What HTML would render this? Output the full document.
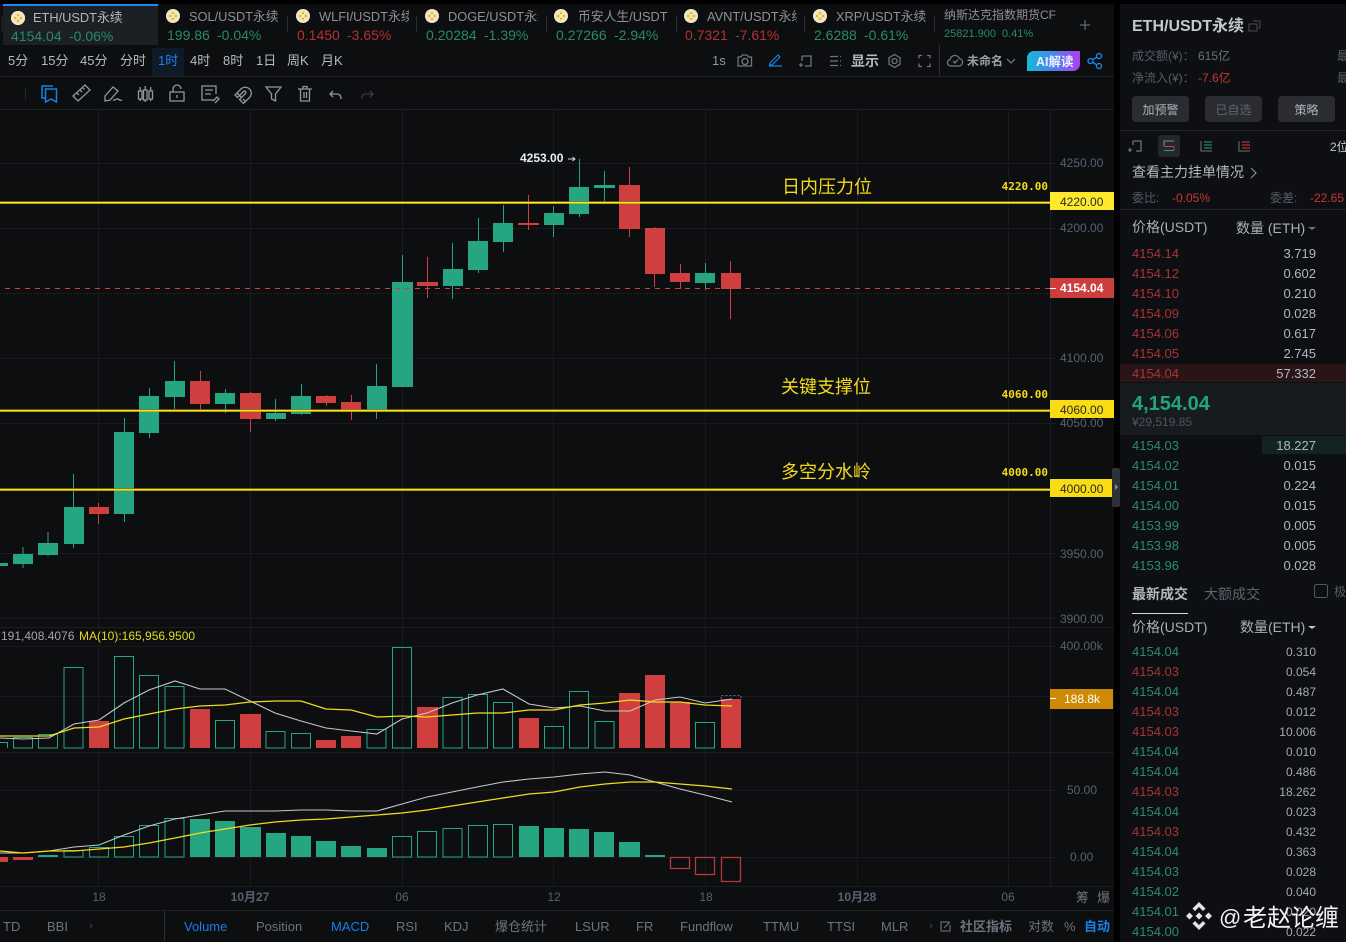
<!DOCTYPE html>
<html lang="zh"><head><meta charset="utf-8"><title>ETH/USDT</title>
<style>
html,body{margin:0;padding:0;background:#0c0e10;width:1346px;height:942px;overflow:hidden}
svg{display:block;font-family:"Liberation Sans","Noto Sans CJK SC",sans-serif}
.g{fill:#26a583}.r{fill:#cf3f3f}
.tn{fill:#8d9198;font-size:12.8px}.tg{fill:#278b6b;font-size:14px}.tr{fill:#b83030;font-size:14px}
.tf{fill:#b6bac0;font-size:13px}
.ax{fill:#566273;font-size:12px}
.pg{fill:#2a8c6c;font-size:13px}.pr{fill:#a63434;font-size:13px}
.q{fill:#b4b7bb;font-size:13px;text-anchor:end}
.q2{fill:#a5a8ad;font-size:12px;text-anchor:end}
.bt{fill:#6d747e;font-size:13px}.bb{fill:#1a7fe8;font-size:13px}
.ic{fill:none;stroke:#9298a0;stroke-width:1.3}
.ann{fill:#f2da1c;font-size:18px}
.mono{font-family:"DejaVu Sans Mono","Liberation Mono",monospace;font-size:11px;fill:#f2da1c;text-anchor:end;font-weight:bold}
</style></head><body>
<svg width="1346" height="942" viewBox="0 0 1346 942" xmlns="http://www.w3.org/2000/svg">
<rect width="1346" height="942" fill="#0c0e10"/>
<rect width="1346" height="4" fill="#000"/>

<!-- top tabs -->
<rect x="3" y="4" width="155" height="41" fill="#1c1f24"/>
<rect x="3" y="4" width="155" height="2" fill="#1a8cf0"/>
<defs><g id="coin"><circle r="7" fill="#efe6cc"/><path d="M0-4.5 1.6-2.9 0-1.3-1.6-2.9ZM-2.9-1.6-1.3 0-2.9 1.6-4.5 0ZM2.9-1.6 4.5 0 2.9 1.6 1.3 0ZM0 1.3 1.6 2.9 0 4.5-1.6 2.9Z" fill="#f0b90b"/></g></defs>
<circle cx="18" cy="18" r="7" fill="#fff"/><use href="#coin" x="18" y="18"/>
<text x="33" y="22" class="tn" style="fill:#b3b7bd">ETH/USDT永续</text>
<text x="11" y="41" class="tg">4154.04</text><text x="69" y="41" class="tg">-0.06%</text>
<g class="tn">
<use href="#coin" x="173" y="16"/><text x="189" y="21" class="tn">SOL/USDT永续</text>
<use href="#coin" x="303" y="16"/><text x="319" y="21" class="tn">WLFI/USDT永续</text>
<use href="#coin" x="432" y="16"/><text x="448" y="21" class="tn">DOGE/USDT永续</text>
<use href="#coin" x="561" y="16"/><text x="578" y="21" class="tn">币安人生/USDT</text>
<use href="#coin" x="691" y="16"/><text x="707" y="21" class="tn">AVNT/USDT永续</text>
<use href="#coin" x="820" y="16"/><text x="836" y="21" class="tn">XRP/USDT永续</text>
</g>
<rect x="409" y="6" width="16" height="20" fill="#0c0e10"/>
<rect x="538" y="6" width="16" height="20" fill="#0c0e10"/>
<rect x="797" y="6" width="16" height="20" fill="#0c0e10"/>
<text x="944" y="19" class="tn" style="font-size:12px">纳斯达克指数期货CFD</text>
<rect x="1056" y="6" width="24" height="20" fill="#0c0e10"/>
<text x="944" y="37" class="tg" style="font-size:11px">25821.900</text><text x="1002" y="37" class="tg" style="font-size:11px">0.41%</text>
<text x="167" y="40" class="tg">199.86</text><text x="217" y="40" class="tg">-0.04%</text>
<text x="297" y="40" class="tr">0.1450</text><text x="347" y="40" class="tr">-3.65%</text>
<text x="426" y="40" class="tg">0.20284</text><text x="484" y="40" class="tg">-1.39%</text>
<text x="556" y="40" class="tg">0.27266</text><text x="614" y="40" class="tg">-2.94%</text>
<text x="685" y="40" class="tr">0.7321</text><text x="735" y="40" class="tr">-7.61%</text>
<text x="814" y="40" class="tg">2.6288</text><text x="864" y="40" class="tg">-0.61%</text>
<path d="M2 16v16M287.500 16v16M416.500 16v16M546.500 16v16M676.500 16v16M804.500 16v16M934.500 16v16" stroke="#2a2d31"/>
<path d="M1085 20v10M1080 25h10" stroke="#777c83" stroke-width="1"/>

<!-- timeframe row -->
<rect x="152" y="48" width="32" height="28" fill="#0f1a28"/>
<g class="tf">
<text x="8" y="65" class="tf">5分</text><text x="41" y="65" class="tf">15分</text><text x="80" y="65" class="tf">45分</text><text x="120" y="65" class="tf">分时</text>
<text x="158" y="65" class="tf" style="fill:#1a7fe8">1时</text><text x="190" y="65" class="tf">4时</text><text x="223" y="65" class="tf">8时</text><text x="256" y="65" class="tf">1日</text><text x="287" y="65" class="tf">周K</text><text x="321" y="65" class="tf">月K</text>
<text x="712" y="65" class="tf" style="fill:#8b97a8">1s</text>
</g>
<path class="ic" style="stroke:#6f747b" d="M738 57h3l1.500-2h4.500l1.500 2h3v9h-13.500zM745 58.500a3 3 0 1 0 .01 0z"/>
<path d="M769 66h13M770 63l8-8 2 2-8 8h-2.500z" fill="none" stroke="#1a7fe8" stroke-width="1.2"/>
<path class="ic" style="stroke:#6f747b" d="M802 56h9v10h-6M801 67v-4M799 65h4M802 56v5"/>
<path class="ic" style="stroke:#6f747b" d="M830 56.500h8M830 61h8M830 65.500h8M840 56.500h1M840 61h1M840 65.500h1"/>
<text x="851" y="66" style="fill:#b5b9bf;font-size:14px;font-weight:bold">显示</text>
<path class="ic" style="stroke:#6f747b" d="M894.500 54.500l5.500 3.200v6.500l-5.500 3.200-5.500-3.200v-6.500z"/><circle cx="894.500" cy="61" r="2.500" class="ic" style="stroke:#6f747b"/>
<path class="ic" style="stroke:#6f747b" d="M919 58.500v-3h3M930 58.500v-3h-3M919 63.500v3h3M930 63.500v3h-3"/>
<path d="M939.500 45v31" stroke="#2a2d31"/>
<path class="ic" style="stroke:#747a82" d="M953 66h6a3.800 3.800 0 0 0 .5-7.500 5 5 0 0 0-9.500 1 3.300 3.300 0 0 0 1 6.500zM953 61l2 2 3-3.500"/>
<text x="967" y="65" class="tf" style="font-size:12px;font-weight:bold;fill:#9aa0a8">未命名</text>
<path class="ic" d="M1007 59l4 4 4-4" style="stroke:#6f747b"/>
<defs><linearGradient id="ai" x1="0" x2="1" y1="0" y2="0"><stop offset="0" stop-color="#17b8d6"/><stop offset=".5" stop-color="#4a83ef"/><stop offset="1" stop-color="#b03df0"/></linearGradient></defs>
<path d="M1034 51h46v13a7 7 0 0 1-7 7h-46v-13a7 7 0 0 1 7-7z" fill="url(#ai)"/>
<text x="1036" y="66" style="fill:#e8f1ff;font-size:12.500px;font-weight:bold">AI解读</text>
<g fill="none" stroke="#1a8cf0" stroke-width="1.3"><circle cx="1090.500" cy="61" r="2.500"/><circle cx="1099" cy="56" r="2.500"/><circle cx="1099" cy="66" r="2.500"/><path d="M1092.700 59.700l4-2.500M1092.700 62.300l4 2.500"/></g>
<rect x="0" y="76" width="1116" height="1" fill="#1f2124"/>
<rect x="0" y="109" width="1116" height="1" fill="#1f2124"/>

<!-- drawing tools -->
<path d="M25.500 87v13" stroke="#26292c"/>
<g fill="none" stroke="#1a7fe8" stroke-width="1.500"><path d="M46 98h-4V86h11"/><path d="M45.500 89h11v13l-5.500-3-5.500 3z"/></g>
<g class="ic">
<path d="M73 96l12-11 5 5-12 11zM77 93l2 2M80 90l2 2M83 88l1.500 1.500"/>
<path d="M105 96l8-9 5 4-8 9-5 1zM113 100c2 1 3-2 5-1s2 2 4 1"/>
<path d="M138.500 91h3.500v8h-3.500zM143.500 90h3.500v10h-3.500zM149 91h3.500v8H149zM140.200 87v4M140.200 99v2M145.200 86v4M145.200 100v2M150.700 87v4M150.700 99v2"/>
<path d="M170 92h14v9h-14zM173 92v-3a4 4 0 0 1 8 0M177 95v3"/>
<path d="M214 100h-12V86h14v8M205 90h8M205 94h6M213 101l4-4 2 2-4 4"/>
<path d="M235 95l6-6a6 6 0 0 1 8.500 8.500l-6 6-4-4 6-6a1 1 0 0 0-2-2l-6 6zM237 93l4 4M243 99l3 3"/>
<path d="M266 87h15l-5.500 7v7l-4-2v-5z"/>
<path d="M298 89h14M300.500 89v12h9V89M303 86.500h4v2.500h-4zM304 92v6M306.500 92v6"/>
<path d="M333 91l-3 3 3 3M330 94h7c3 0 4 2 4 5"/>
</g>
<path d="M370 91l3 3-3 3M373 94h-7c-3 0-4 2-4 5" fill="none" stroke="#35383c" stroke-width="1.300"/>

<!-- grid -->
<g stroke="#181a1d" fill="none">
<path d="M0 163.500H1056M0 228.500H1056M0 293.500H1056M0 358.500H1056M0 423.500H1056M0 488.500H1056M0 553.500H1056M0 618.500H1056M0 646.500H1056M0 696.500H1056M0 790.500H1056M0 857.500H1056"/>
<path d="M98.500 110V886M250.500 110V886M402.500 110V886M553.500 110V886M705.500 110V886M857.500 110V886M1008.500 110V886"/>
</g>
<g stroke="#1b1d20" fill="none"><path d="M0 627.500H1114M0 752.500H1114M0 886.500H1114M1050.500 110V886"/></g>

<!-- candles -->
<g class="g">
<rect x="0" y="563" width="8" height="3"/>
<rect x="22.500" y="547" width="1" height="21"/><rect x="13" y="554" width="20" height="10"/>
<rect x="47.500" y="532" width="1" height="24"/><rect x="38" y="543" width="20" height="12"/>
<rect x="73" y="474" width="1" height="74"/><rect x="64" y="507" width="20" height="37"/>
<rect x="124" y="418" width="1" height="104"/><rect x="114" y="432" width="20" height="82"/>
<rect x="149" y="388" width="1" height="50"/><rect x="139" y="396" width="20" height="37"/>
<rect x="174" y="361" width="1" height="48"/><rect x="165" y="381" width="20" height="16"/>
<rect x="225" y="389" width="1" height="24"/><rect x="215" y="393" width="20" height="11"/>
<rect x="275" y="399" width="1" height="22"/><rect x="266" y="413" width="20" height="6"/>
<rect x="301" y="384" width="1" height="31"/><rect x="291" y="396" width="20" height="18"/>
<rect x="376" y="364" width="1" height="55"/><rect x="367" y="386" width="20" height="24"/>
<rect x="402" y="255" width="1" height="30"/><rect x="392" y="282" width="21" height="105"/>
<rect x="452" y="243" width="1" height="56"/><rect x="443" y="269" width="20" height="17"/>
<rect x="478" y="218" width="1" height="55"/><rect x="468" y="241" width="20" height="29"/>
<rect x="503" y="205" width="1" height="47"/><rect x="493" y="223" width="20" height="19"/>
<rect x="553" y="206" width="1" height="31"/><rect x="544" y="213" width="20" height="12"/>
<rect x="579" y="159" width="1" height="58"/><rect x="569" y="187" width="20" height="27"/>
<rect x="604" y="171" width="1" height="30"/><rect x="594" y="185" width="21" height="3"/>
<rect x="705" y="263" width="1" height="27"/><rect x="695" y="273" width="20" height="10"/>
</g>
<g class="r">
<rect x="98" y="503" width="1" height="21"/><rect x="89" y="507" width="20" height="7"/>
<rect x="200" y="371" width="1" height="39"/><rect x="190" y="381" width="20" height="23"/>
<rect x="250" y="392" width="1" height="40"/><rect x="240" y="393" width="21" height="26"/>
<rect x="326" y="395" width="1" height="11"/><rect x="316" y="396" width="20" height="7"/>
<rect x="351" y="395" width="1" height="25"/><rect x="341" y="402" width="20" height="8"/>
<rect x="427" y="257" width="1" height="41"/><rect x="417" y="282" width="21" height="4"/>
<rect x="528" y="195" width="1" height="35"/><rect x="518" y="223" width="21" height="2"/>
<rect x="629" y="167" width="1" height="70"/><rect x="619" y="185" width="21" height="44"/>
<rect x="654" y="227" width="1" height="60"/><rect x="645" y="228" width="20" height="46"/>
<rect x="680" y="264" width="1" height="25"/><rect x="670" y="273" width="20" height="9"/>
<rect x="730" y="261" width="1" height="58"/><rect x="721" y="273" width="20" height="16"/>
</g>
<path d="M5 288.500H1050" stroke="#cf3f3f" stroke-dasharray="5 5"/>

<!-- yellow lines -->
<g>
<rect x="0" y="201" width="1050" height="3" fill="#8a7a12" opacity=".7"/><rect x="0" y="202" width="1050" height="1.500" fill="#ffe92a"/>
<rect x="0" y="409" width="1050" height="3" fill="#8a7a12" opacity=".7"/><rect x="0" y="410" width="1050" height="1.500" fill="#ffe020"/>
<rect x="0" y="488" width="1050" height="3" fill="#8a7a12" opacity=".7"/><rect x="0" y="489" width="1050" height="1.500" fill="#ffe020"/>
</g>
<text x="782" y="193" class="ann">日内压力位</text>
<text x="781" y="393" class="ann">关键支撑位</text>
<text x="781" y="478" class="ann">多空分水岭</text>
<text x="1048" y="190" class="mono">4220.00</text>
<text x="1048" y="398" class="mono">4060.00</text>
<text x="1048" y="476" class="mono">4000.00</text>
<text x="520" y="162" style="fill:#e8eef5;font-size:12px;font-weight:bold">4253.00</text>
<path d="M568 159h7M572.500 157l2.500 2-2.500 2" fill="none" stroke="#d8d8d8"/>

<!-- price axis -->
<g class="ax">
<text x="1060" y="167" class="ax">4250.00</text><text x="1060" y="232" class="ax">4200.00</text>
<text x="1060" y="362" class="ax">4100.00</text><text x="1060" y="427" class="ax">4050.00</text>
<text x="1060" y="558" class="ax">3950.00</text><text x="1060" y="623" class="ax">3900.00</text>
<text x="1060" y="650" class="ax">400.00k</text><text x="1067" y="794" class="ax">50.00</text><text x="1070" y="861" class="ax">0.00</text>
</g>
<rect x="1050" y="192" width="64" height="18" fill="#ffe92e"/><text x="1060" y="206" style="fill:#2a2a1a;font-size:12px">4220.00</text>
<rect x="1050" y="278" width="64" height="20" fill="#cc3d3d"/><rect x="1050" y="288" width="6" height="1" fill="#fff"/><text x="1060" y="292" style="fill:#fff;font-size:12px;font-weight:bold">4154.04</text>
<rect x="1050" y="400" width="64" height="18" fill="#fadc14"/><text x="1060" y="414" style="fill:#2a2a1a;font-size:12px">4060.00</text>
<rect x="1050" y="479" width="64" height="18" fill="#fadc14"/><text x="1060" y="493" style="fill:#2a2a1a;font-size:12px">4000.00</text>
<rect x="1050" y="689" width="63" height="20" fill="#cf8a05"/><rect x="1050" y="698" width="6" height="1" fill="#fff"/><text x="1064" y="703" style="fill:#fff;font-size:12px">188.8k</text>

<!-- legend -->
<text x="1" y="640" style="fill:#a4a6aa;font-size:12px">191,408.4076</text>
<text x="79" y="640" style="fill:#e4d822;font-size:12px">MA(10):165,956.9500</text>

<!-- volume -->
<g fill="none" stroke="#26a583">
<path d="M0 742.500H7.500V748"/>
<rect x="13.500" y="737.500" width="19" height="10.500"/><rect x="38.500" y="734.500" width="19" height="13.500"/>
<rect x="64" y="667.500" width="19" height="80.500"/><rect x="114.500" y="656.500" width="19" height="91.500"/>
<rect x="139.500" y="675.500" width="19" height="72.500"/><rect x="165" y="686.500" width="19" height="61.500"/>
<rect x="215.500" y="720.500" width="19" height="27.500"/><rect x="266" y="731.500" width="19" height="16.500"/>
<rect x="291.500" y="733.500" width="19" height="14.500"/><rect x="367" y="729.500" width="19" height="18.500"/>
<rect x="392.500" y="647.500" width="19" height="100.500"/><rect x="443" y="697.500" width="19" height="50.500"/>
<rect x="468.500" y="694.500" width="19" height="53.500"/><rect x="493.500" y="702.500" width="19" height="45.500"/>
<rect x="544.500" y="726.500" width="19" height="21.500"/><rect x="569.500" y="691.500" width="19" height="56.500"/>
<rect x="595" y="721.500" width="19" height="26.500"/><rect x="695.500" y="722.500" width="19" height="25.500"/>
</g>
<g class="r">
<rect x="89" y="721" width="20" height="27"/><rect x="190" y="709" width="20" height="39"/><rect x="240" y="714" width="21" height="34"/>
<rect x="316" y="740" width="20" height="8"/><rect x="341" y="736" width="20" height="12"/><rect x="417" y="707" width="21" height="41"/>
<rect x="519" y="718" width="20" height="30"/><rect x="619" y="693" width="21" height="55"/><rect x="645" y="675" width="20" height="73"/>
<rect x="670" y="702" width="20" height="46"/><rect x="721" y="699" width="20" height="49"/>
</g>
<path d="M721 699v-3.500h20v3.500" fill="none" stroke="#6a6a6a" stroke-dasharray="2 2"/>
<polyline fill="none" stroke="#c6c8ca" stroke-width="1.100" points="0,738 23,739 49,738 74,724 99,720 124,703 149,690 175,681 200,689 225,689 250,701 275,713 301,721 326,728 351,731 377,734 402,719 427,713 452,703 477,695 503,689 529,704 554,708 580,706 605,711 630,711 655,700 680,697 705,703 732,699"/>
<polyline fill="none" stroke="#f2dc1a" stroke-width="1.300" points="0,736 49,736 74,728 99,727 124,719 149,714 175,709 200,706 225,705 250,702 275,701 301,701 326,709 351,710 377,717 402,716 427,717 452,715 477,713 503,713 529,710 554,710 580,705 605,703 630,700 655,702 680,702 705,705 732,706"/>

<!-- macd -->
<g class="r"><rect x="0" y="857" width="8" height="5"/><rect x="13" y="857" width="20" height="3"/></g>
<g class="g">
<rect x="38" y="855" width="20" height="2"/><rect x="190" y="819" width="20" height="38"/><rect x="215" y="821" width="20" height="36"/>
<rect x="240" y="827" width="21" height="30"/><rect x="266" y="833" width="20" height="24"/><rect x="291" y="836" width="20" height="21"/>
<rect x="316" y="841" width="20" height="16"/><rect x="341" y="846" width="20" height="11"/><rect x="367" y="848" width="20" height="9"/>
<rect x="519" y="826" width="20" height="31"/><rect x="544" y="828" width="20" height="29"/><rect x="569" y="829" width="20" height="28"/>
<rect x="594" y="832" width="20" height="25"/><rect x="619" y="842" width="21" height="15"/><rect x="645" y="855" width="20" height="2"/>
</g>
<g fill="none" stroke="#26a583">
<rect x="64" y="850.500" width="19" height="6.500"/><rect x="89.500" y="847.500" width="19" height="9.500"/><rect x="114.500" y="836.500" width="19" height="20.500"/>
<rect x="139.500" y="825.500" width="19" height="31.500"/><rect x="165" y="818.500" width="19" height="38.500"/><rect x="392.500" y="836.500" width="19" height="20.500"/>
<rect x="417.500" y="831.500" width="19" height="25.500"/><rect x="443" y="828.500" width="19" height="28.500"/><rect x="468.500" y="825.500" width="19" height="31.500"/>
<rect x="493.500" y="824.500" width="19" height="32.500"/>
</g>
<g fill="none" stroke="#b53a3a" stroke-width="1.300">
<rect x="670.500" y="857.500" width="19" height="11"/><rect x="695.500" y="857.500" width="19" height="17"/><rect x="721.500" y="857.500" width="19" height="24"/>
</g>
<polyline fill="none" stroke="#c6c8ca" stroke-width="1.100" points="0,853 23,853 49,851 74,847 99,845 124,835 149,826 175,819 200,815 225,811 250,811 275,811 301,810 326,810 351,811 377,811 402,804 427,797 452,792 477,787 503,782 529,779 554,777 580,774 605,772 630,775 655,782 680,789 705,795 732,802"/>
<polyline fill="none" stroke="#f2dc1a" stroke-width="1.300" points="0,851 23,853 49,851 74,851 99,849 124,847 149,843 175,838 200,833 225,829 250,825 275,822 301,820 326,819 351,817 377,815 402,813 427,810 452,806 477,802 503,798 529,794 554,792 580,787 605,784 630,782 655,782 680,784 705,786 732,789"/>

<!-- date axis -->
<g class="ax" text-anchor="middle">
<text x="99" y="901" class="ax">18</text><text x="250" y="901" class="ax" style="font-weight:bold">10月27</text>
<text x="402" y="901" class="ax">06</text><text x="554" y="901" class="ax">12</text><text x="706" y="901" class="ax">18</text>
<text x="857" y="901" class="ax" style="font-weight:bold">10月28</text><text x="1008" y="901" class="ax">06</text>
</g>
<text x="1076" y="902" class="bt">筹</text><text x="1097" y="902" class="bt">爆</text>

<!-- bottom tabs -->
<rect x="0" y="910" width="1116" height="1" fill="#1f2124"/>
<path d="M164.500 911v30" stroke="#2a2d31"/>
<text x="3" y="931" class="bt">TD</text><text x="47" y="931" class="bt">BBI</text><path d="M90 924l2 2-2 2" fill="none" stroke="#3c4046"/>
<text x="184" y="931" class="bb">Volume</text><text x="256" y="931" class="bt">Position</text><text x="331" y="931" class="bb">MACD</text>
<text x="396" y="931" class="bt">RSI</text><text x="444" y="931" class="bt">KDJ</text><text x="495" y="931" class="bt">爆仓统计</text>
<text x="575" y="931" class="bt">LSUR</text><text x="636" y="931" class="bt">FR</text><text x="680" y="931" class="bt">Fundflow</text>
<text x="763" y="931" class="bt">TTMU</text><text x="827" y="931" class="bt">TTSI</text><text x="881" y="931" class="bt">MLR</text>
<path d="M930 924l2 2-2 2" fill="none" stroke="#3c4046"/>
<path class="ic" style="stroke:#5f656d" d="M949 922h-8v9h9v-6M944 928l6-6"/>
<text x="960" y="931" class="bt" style="font-weight:bold">社区指标</text><text x="1028" y="931" class="bt">对数</text><text x="1064" y="931" class="bt">%</text><text x="1084" y="931" class="bb" style="font-weight:bold">自动</text>

<!-- right panel -->
<rect x="1114" y="0" width="6" height="942" fill="#000"/>
<rect x="1120" y="4" width="226" height="938" fill="#0d0f12"/>
<rect x="1112" y="468" width="8" height="39" rx="2" fill="#2e3136"/><path d="M1115 484l3 3-3 3z" fill="#8a8f96"/>
<text x="1132" y="31" style="fill:#c3c8ce;font-size:16px;font-weight:bold">ETH/USDT永续</text>
<path d="M1253 21h7v7h-2M1249 24h8v7h-8z" fill="none" stroke="#4a4e55"/>
<text x="1132" y="60" style="fill:#555d69;font-size:12px">成交额(¥)：</text><text x="1198" y="60" style="fill:#68727f;font-size:12px">615亿</text>
<text x="1132" y="82" style="fill:#555d69;font-size:12px">净流入(¥)：</text><text x="1198" y="82" style="fill:#c93535;font-size:12px">-7.6亿</text>
<text x="1337" y="60" style="fill:#555d69;font-size:12px">最</text><text x="1337" y="82" style="fill:#555d69;font-size:12px">最</text>
<rect x="1132" y="96" width="57" height="26" rx="4" fill="#2a2c31"/><rect x="1205" y="96" width="57" height="26" rx="4" fill="#2a2c31"/><rect x="1278" y="96" width="57" height="26" rx="4" fill="#2a2c31"/>
<g text-anchor="middle" style="font-size:12px"><text x="1160.500" y="114" fill="#aeb3ba">加预警</text><text x="1233.500" y="114" fill="#5e646d">已自选</text><text x="1306.500" y="114" fill="#aeb3ba">策略</text></g>
<rect x="1120" y="130" width="226" height="1" fill="#222428"/>
<path class="ic" style="stroke:#6f747b" d="M1133 141h8v10h-5M1130 152v-4M1128 150h4M1133 141v4"/>
<rect x="1158" y="135" width="22" height="22" rx="3" fill="#24272b"/>
<path d="M1174 141h-10v5" fill="none" stroke="#8a8f96"/><path d="M1164 146.500h10v4" fill="none" stroke="#c94040"/><path d="M1164 150.500h10" stroke="#26a583"/>
<path d="M1201 141v10h11" fill="none" stroke="#6f747b"/><path d="M1204 142h8M1204 145h8M1204 148h8" stroke="#26a583"/>
<path d="M1239 141v10h11" fill="none" stroke="#6f747b"/><path d="M1242 142h8M1242 145h8M1242 148h8" stroke="#cf3f3f"/>
<text x="1330" y="151" style="fill:#c5c8cc;font-size:12px">2位</text>
<text x="1132" y="177" style="fill:#b4b9c0;font-size:14px">查看主力挂单情况</text>
<path d="M1251 168l5 5-5 5" fill="none" stroke="#8a8f96" stroke-width="1.200"/>
<text x="1132" y="202" style="fill:#555d69;font-size:12px">委比:</text><text x="1172" y="202" style="fill:#c93535;font-size:12px">-0.05%</text>
<text x="1270" y="202" style="fill:#555d69;font-size:12px">委差:</text><text x="1310" y="202" style="fill:#c93535;font-size:12px">-22.65</text>
<rect x="1120" y="209" width="226" height="1" fill="#222428"/>
<text x="1132" y="232" style="fill:#aab0b7;font-size:14px">价格(USDT)</text><text x="1236" y="233" style="fill:#aab0b7;font-size:14px">数量 (ETH)</text>
<path d="M1308 227h8l-4 3z" fill="#6f747b"/>

<rect x="1120" y="364" width="226" height="18" fill="#291517"/>
<rect x="1120" y="383" width="226" height="52" fill="#161b1f"/>
<text x="1132" y="410" style="fill:#22a578;font-size:20px;font-weight:bold">4,154.04</text>
<text x="1132" y="426" style="fill:#50555c;font-size:12px">¥29,519.85</text>
<rect x="1262" y="436" width="84" height="18" fill="#12241f"/>
<text x="1132" y="258" class="pr">4154.14</text><text x="1316" y="258" class="q">3.719</text>
<text x="1132" y="278" class="pr">4154.12</text><text x="1316" y="278" class="q">0.602</text>
<text x="1132" y="298" class="pr">4154.10</text><text x="1316" y="298" class="q">0.210</text>
<text x="1132" y="318" class="pr">4154.09</text><text x="1316" y="318" class="q">0.028</text>
<text x="1132" y="338" class="pr">4154.06</text><text x="1316" y="338" class="q">0.617</text>
<text x="1132" y="358" class="pr">4154.05</text><text x="1316" y="358" class="q">2.745</text>
<text x="1132" y="378" class="pr">4154.04</text><text x="1316" y="378" class="q">57.332</text>
<text x="1132" y="450" class="pg">4154.03</text><text x="1316" y="450" class="q">18.227</text>
<text x="1132" y="470" class="pg">4154.02</text><text x="1316" y="470" class="q">0.015</text>
<text x="1132" y="490" class="pg">4154.01</text><text x="1316" y="490" class="q">0.224</text>
<text x="1132" y="510" class="pg">4154.00</text><text x="1316" y="510" class="q">0.015</text>
<text x="1132" y="530" class="pg">4153.99</text><text x="1316" y="530" class="q">0.005</text>
<text x="1132" y="550" class="pg">4153.98</text><text x="1316" y="550" class="q">0.005</text>
<text x="1132" y="570" class="pg">4153.96</text><text x="1316" y="570" class="q">0.028</text>

<text x="1132" y="599" style="fill:#b4b9c0;font-size:14px;font-weight:bold">最新成交</text><text x="1204" y="599" style="fill:#5a6472;font-size:14px">大额成交</text>
<rect x="1314.500" y="584.500" width="13" height="13" rx="2" fill="none" stroke="#55595f"/><text x="1334" y="596" style="fill:#555d69;font-size:12px">极</text>
<rect x="1132" y="613" width="56" height="1" fill="#d8dadd"/>
<text x="1132" y="632" style="fill:#aab0b7;font-size:14px">价格(USDT)</text><text x="1240" y="632" style="fill:#aab0b7;font-size:14px">数量(ETH)</text>
<path d="M1308 626h8l-4 3z" fill="#c5c8cc"/>

<text x="1132" y="656" class="pg">4154.04</text><text x="1316" y="656" class="q2">0.310</text>
<text x="1132" y="676" class="pr">4154.03</text><text x="1316" y="676" class="q2">0.054</text>
<text x="1132" y="696" class="pg">4154.04</text><text x="1316" y="696" class="q2">0.487</text>
<text x="1132" y="716" class="pr">4154.03</text><text x="1316" y="716" class="q2">0.012</text>
<text x="1132" y="736" class="pr">4154.03</text><text x="1316" y="736" class="q2">10.006</text>
<text x="1132" y="756" class="pg">4154.04</text><text x="1316" y="756" class="q2">0.010</text>
<text x="1132" y="776" class="pg">4154.04</text><text x="1316" y="776" class="q2">0.486</text>
<text x="1132" y="796" class="pr">4154.03</text><text x="1316" y="796" class="q2">18.262</text>
<text x="1132" y="816" class="pg">4154.04</text><text x="1316" y="816" class="q2">0.023</text>
<text x="1132" y="836" class="pr">4154.03</text><text x="1316" y="836" class="q2">0.432</text>
<text x="1132" y="856" class="pg">4154.04</text><text x="1316" y="856" class="q2">0.363</text>
<text x="1132" y="876" class="pg">4154.03</text><text x="1316" y="876" class="q2">0.028</text>
<text x="1132" y="896" class="pg">4154.02</text><text x="1316" y="896" class="q2">0.040</text>
<text x="1132" y="916" class="pg">4154.01</text><text x="1316" y="916" class="q2">0.020</text>
<text x="1132" y="936" class="pg">4154.00</text><text x="1316" y="936" class="q2">0.022</text>

<!-- watermark -->
<path d="M1199 902l6.500 6.500-2.500 2.500-4-4-4 4-2.500-2.500zM1199 930l6.500-6.500-2.500-2.500-4 4-4-4-2.500 2.500zM1199 912.500l3.500 3.500-3.500 3.500-3.500-3.500zM1189.500 912.500l3.500 3.500-3.500 3.500-3.500-3.500zM1208.500 912.500l3.500 3.500-3.500 3.500-3.500-3.500z" fill="#e4e4e4"/>
<text x="1219" y="925" style="fill:#f2f2f2;font-size:22px">@</text>
<text x="1243" y="926" style="fill:#f4f4f4;font-size:24px">老赵论缠</text>
</svg>
</body></html>
